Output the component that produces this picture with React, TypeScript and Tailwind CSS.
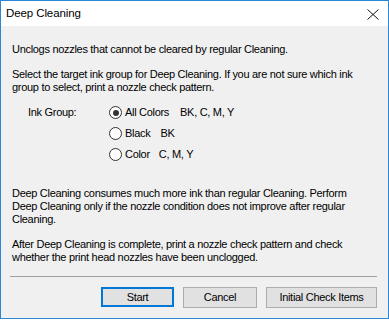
import React from "react";

const font = { fontFamily: '"Liberation Sans", Arial, sans-serif' };

function Radio({ checked }: { checked?: boolean }) {
  return (
    <span className="flex h-[13px] w-[13px] shrink-0 items-center justify-center rounded-full border border-[#333333] bg-white">
      {checked && <span className="h-[6px] w-[6px] rounded-full bg-[#333333]" />}
    </span>
  );
}

function RadioRow({ label, value, checked, gap }: { label: string; value: string; checked?: boolean; gap: string }) {
  return (
    <div className="flex h-[21px] items-center">
      <Radio checked={checked} />
      <span className="ml-[3px] leading-[13px]">{label}</span>
      <span className={`leading-[13px] ${gap}`}>{value}</span>
    </div>
  );
}

export default function App() {
  return (
    <div
      className="h-[319px] w-[389px] bg-white text-[11px] tracking-[-0.3px] text-black"
      style={font}
    >
      <div className="flex h-[319px] w-[389px] flex-col border border-[#2b86d6] bg-[#f0f0f0]">
        {/* title bar */}
        <div className="flex h-[25px] shrink-0 items-center justify-between bg-white pl-[5px] pr-[9px]">
          <span className="pt-[1px] text-[11.5px] tracking-[-0.1px]">Deep Cleaning</span>
          <svg width="12" height="11" viewBox="0 0 12 11" className="mt-[2px]">
            <path d="M0.5 0.5 L11.5 10.5 M11.5 0.5 L0.5 10.5" stroke="#111" strokeWidth="1" fill="none" />
          </svg>
        </div>

        {/* content */}
        <div className="flex flex-col pl-[11px] pr-[11px] pt-[17px] leading-[13px]">
          <p className="whitespace-nowrap">Unclogs nozzles that cannot be cleared by regular Cleaning.</p>
          <p className="mt-[12px] whitespace-nowrap">
            Select the target ink group for Deep Cleaning. If you are not sure which ink
            <br />
            group to select, print a nozzle check pattern.
          </p>

          <div className="mt-[8px] flex">
            <div className="flex h-[21px] w-[97px] items-center pl-[16px]">
              <span className="leading-[13px]">Ink Group:</span>
            </div>
            <div className="flex flex-col">
              <RadioRow label="All Colors" value="BK, C, M, Y" checked gap="ml-[11px]" />
              <RadioRow label="Black" value="BK" gap="ml-[10px]" />
              <RadioRow label="Color" value="C, M, Y" gap="ml-[9px]" />
            </div>
          </div>

          <p className="mt-[22px] whitespace-nowrap">
            Deep Cleaning consumes much more ink than regular Cleaning. Perform
            <br />
            Deep Cleaning only if the nozzle condition does not improve after regular
            <br />
            Cleaning.
          </p>
          <p className="mt-[12px] whitespace-nowrap">
            After Deep Cleaning is complete, print a nozzle check pattern and check
            <br />
            whether the print head nozzles have been unclogged.
          </p>
        </div>

        <div className="ml-[9px] mr-[11px] mt-[12px] h-px bg-[#a0a0a0]" />

        <div className="mt-[10px] flex justify-end pr-[11px]">
          <button className="flex h-[20px] w-[73px] items-center justify-center border-2 border-[#0078d7] bg-[#e1e1e1] leading-[13px]">
            Start
          </button>
          <button className="ml-[9px] flex h-[21px] w-[74px] items-center justify-center border border-[#adadad] bg-[#e1e1e1] leading-[13px]">
            Cancel
          </button>
          <button className="ml-[9px] flex h-[21px] w-[111px] items-center justify-center border border-[#adadad] bg-[#e1e1e1] leading-[13px]">
            Initial Check Items
          </button>
        </div>
      </div>
    </div>
  );
}
